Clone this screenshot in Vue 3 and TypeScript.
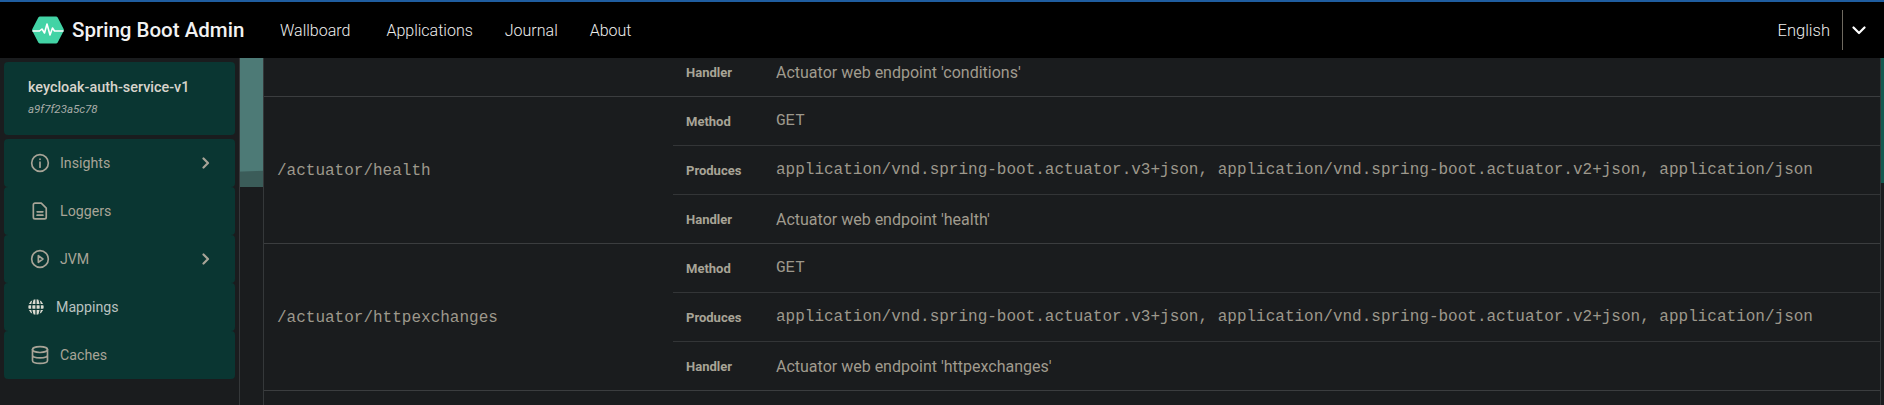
<script setup lang="ts">
interface Sub { label: string; value: string; mono?: boolean }
interface Group { path: string; subs: Sub[] }
const prod = 'application/vnd.spring-boot.actuator.v3+json, application/vnd.spring-boot.actuator.v2+json, application/json'
const mk = (name: string): Group => ({
  path: '/actuator/' + name,
  subs: [
    { label: 'Method', value: 'GET', mono: true },
    { label: 'Produces', value: prod, mono: true },
    { label: 'Handler', value: `Actuator web endpoint '${name}'` },
  ],
})
const groups: Group[] = [
  { path: '', subs: [{ label: 'Handler', value: "Actuator web endpoint 'conditions'" }] },
  mk('health'),
  mk('httpexchanges'),
]
const nav = ['Wallboard', 'Applications', 'Journal', 'About']
const items = [
  { name: 'Insights', icon: 'info', more: true },
  { name: 'Loggers', icon: 'doc', more: false },
  { name: 'JVM', icon: 'play', more: true },
  { name: 'Mappings', icon: 'globe', more: false },
  { name: 'Caches', icon: 'db', more: false },
]
</script>

<template>
  <div class="page">
    <header class="top">
      <div class="brand">
        <svg class="logo" viewBox="0 0 32 28" width="32" height="28">
          <path d="M8 0.5h16a2 2 0 0 1 1.7 1L31.5 12.8a2.4 2.4 0 0 1 0 2.4L25.7 26.5a2 2 0 0 1-1.7 1H8a2 2 0 0 1-1.7-1L0.5 15.2a2.4 2.4 0 0 1 0-2.4L6.3 1.5a2 2 0 0 1 1.7-1z" fill="#42d3a5" />
          <path d="M1 15h6.5l2.5-2 2.5 4 2.500-9 3 11 2.500-7 2 3h8.500" fill="none" stroke="#fff" stroke-width="1.6" stroke-linejoin="round" stroke-linecap="round" />
        </svg>
        <span class="brand-name">Spring Boot Admin</span>
      </div>
      <nav class="links"><a v-for="n in nav" :key="n" class="link">{{ n }}</a></nav>
      <div class="lang">
        <span class="lang-name">English</span>
        <span class="lang-btn">
          <svg viewBox="0 0 14 9" width="14" height="9"><path d="M1.500 1.500 7 7l5.500-5.500" fill="none" stroke="#fff" stroke-width="2.200" stroke-linecap="round" stroke-linejoin="round" /></svg>
        </span>
      </div>
    </header>
    <div class="body">
      <aside class="side">
        <div class="inst">
          <div class="inst-name">keycloak-auth-service-v1</div>
          <div class="inst-id">a9f7f23a5c78</div>
        </div>
        <ul class="menu">
          <li v-for="it in items" :key="it.name" class="item" :class="{ wide: it.icon === 'globe' }">
            <svg v-if="it.icon === 'info'" class="ic" viewBox="0 0 24 24"><circle cx="12" cy="12" r="10" /><path d="M12 11v6M12 7.200v.6" /></svg>
            <svg v-else-if="it.icon === 'doc'" class="ic" viewBox="0 0 24 24"><path d="M6 2.500h7.500L19.500 8.500V19.500a2 2 0 0 1-2 2h-11.500a2 2 0 0 1-2-2v-15a2 2 0 0 1 2-2z" /><path d="M8.500 13h7M8.500 17h7" /></svg>
            <svg v-else-if="it.icon === 'play'" class="ic" viewBox="0 0 24 24"><circle cx="12" cy="12" r="10" /><path d="M10 8l5.500 4-5.500 4z" /></svg>
            <svg v-else-if="it.icon === 'globe'" class="ic globe" viewBox="0 0 24 24"><circle cx="12" cy="12" r="11.500" class="gf" /><path d="M0 8.500h24M0 15.500h24M12 0v24M7.500 1C5 8 5 16 7.500 23M16.500 1c2.500 7 2.500 15 0 22" class="gl" /></svg>
            <svg v-else class="ic" viewBox="0 0 24 24"><ellipse cx="12" cy="5.500" rx="9" ry="3.500" /><path d="M3 5.500v13c0 2 4 3.500 9 3.500s9-1.500 9-3.500v-13M3 12c0 2 4 3.500 9 3.500s9-1.500 9-3.500" /></svg>
            <span class="item-name">{{ it.name }}</span>
            <svg v-if="it.more" class="chev" viewBox="0 0 8 12" width="8" height="12"><path d="M1.500 1.500 6 6l-4.500 4.500" /></svg>
          </li>
        </ul>
      </aside>
      <div class="track"><div class="thumb"></div></div>
      <main class="main">
        <div class="table">
          <section v-for="(g, i) in groups" :key="i" class="group">
            <div class="path">{{ g.path }}</div>
            <div class="subs">
              <div v-for="s in g.subs" :key="s.label" class="sub">
                <span class="label">{{ s.label }}</span>
                <span class="value" :class="{ mono: s.mono }">{{ s.value }}</span>
              </div>
            </div>
          </section>
        </div>
      </main>
      <div class="edge"><div class="edge-thumb"></div></div>
    </div>
  </div>
</template>

<style>
html, body { margin: 0; background: #1a1c1e; overflow: hidden; }
</style>

<style scoped>
.page { width: 1884px; height: 405px; display: flex; flex-direction: column; font-family: Roboto, "Noto Sans", sans-serif; overflow: hidden; background: #1a1c1e; }
.top { height: 56px; flex: none; background: #000; border-top: 2px solid #1f5da0; display: flex; align-items: center; color: #f0f0f0; }
.brand { display: flex; align-items: center; margin-left: 32px; gap: 8px; }
.logo { display: block; }
.brand-name { font-size: 20.500px; font-weight: 500; color: #f2f2f2; width: 172px; white-space: nowrap; }
.links { display: flex; margin-left: 36px; gap: 32px; }
.link { font-size: 16px; font-weight: 300; color: #ededed; }
.link:first-child { padding-right: 4px; }
.lang { margin-left: auto; display: flex; align-items: center; height: 40px; margin-right: 18px; }
.lang-name { font-size: 16.500px; font-weight: 300; color: #ededed; margin-right: 12px; }
.lang-btn { height: 40px; border-left: 1px solid #6f6a60; padding-left: 9px; display: flex; align-items: center; }
.body { flex: 1; display: flex; min-height: 0; }
.side { width: 239px; flex: none; padding: 4px 4px 0; box-sizing: border-box; }
.inst { height: 73px; background: #0a3632; border-radius: 4px; padding: 16px 24px 0; box-sizing: border-box; }
.inst-name { font-size: 14.400px; font-weight: 500; color: #d8d4cc; line-height: 20px; }
.inst-id { font-size: 11.500px; font-style: italic; color: #a8aca8; line-height: 16px; margin-top: 3px; }
.menu { list-style: none; margin: 4px 0 0; padding: 0; }
.item { height: 48px; background: #0a3632; border-radius: 4px; display: flex; align-items: center; padding-left: 26px; color: #a8a497; font-size: 14.200px; position: relative; }
.item.wide { padding-left: 24px; color: #b9c2c0; }
.ic { width: 20px; height: 20px; flex: none; margin-right: 10px; fill: none; stroke: #a8a497; stroke-width: 2; stroke-linecap: round; stroke-linejoin: round; }
.globe { width: 16px; height: 16px; margin-right: 12px; margin-left: 0; stroke: none; }
.gf { fill: #dcdcd2; stroke: none; }
.gl { fill: none; stroke: #0a3632; stroke-width: 1.800; }
.chev { position: absolute; left: 198px; top: 18px; fill: none; stroke: #a8a497; stroke-width: 2.200; stroke-linecap: round; stroke-linejoin: round; }
.track { width: 25px; flex: none; border-left: 1px solid #35383a; border-right: 1px solid #35383a; box-sizing: border-box; }
.thumb { height: 129px; background: linear-gradient(178deg, #4d7a76 0 113px, #3b5c59 114px); }
.main { flex: 1; min-width: 0; overflow: hidden; }
.table { margin-top: -10px; }
.group { display: flex; border-bottom: 1px solid #3b3d3f; }
.path { width: 409px; flex: none; box-sizing: border-box; padding: 2px 0 0 13px; display: flex; align-items: center; font-family: "Liberation Mono", monospace; font-size: 16px; color: #9d988c; }
.subs { flex: 1; min-width: 0; }
.sub { height: 48px; display: flex; align-items: center; border-bottom: 1px solid #333537; }
.sub:last-child { border-bottom: 0; }
.label { width: 103px; flex: none; padding-left: 13px; box-sizing: border-box; font-size: 13px; font-weight: 700; color: #a8a497; }
.value { font-size: 16px; color: #a09b8e; white-space: nowrap; }
.value.mono { font-family: "Liberation Mono", monospace; font-size: 16px; color: #9d988c; }
.edge { width: 4px; flex: none; border-left: 1px solid #35383a; box-sizing: border-box; }
.edge-thumb { height: 125px; background: #145a50; }
</style>
